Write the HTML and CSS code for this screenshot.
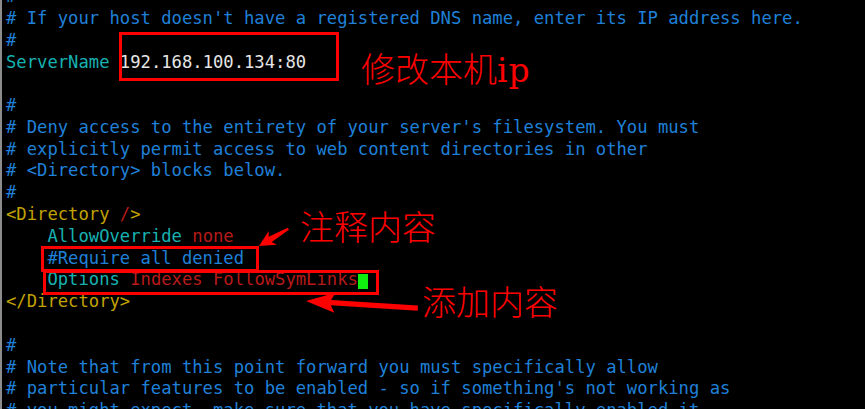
FILE: index.html
```html
<!DOCTYPE html>
<html lang="zh-CN">
<head>
<meta charset="utf-8">
<title>httpd.conf</title>
<link rel="stylesheet" href="styles.css">
</head>
<body>
<div class="term">
<pre class="code"><span class="c">#</span>
<span class="c"># If your host doesn't have a registered DNS name, enter its IP address here.</span>
<span class="c">#</span>
<span class="k">ServerName</span> <span class="w">192.168.100.134:80</span>

<span class="c">#</span>
<span class="c"># Deny access to the entirety of your server's filesystem. You must</span>
<span class="c"># explicitly permit access to web content directories in other</span>
<span class="c"># &lt;Directory&gt; blocks below.</span>
<span class="c">#</span>
<span class="y">&lt;Directory</span> <span class="r">/</span><span class="y">&gt;</span>
    <span class="k">AllowOverride</span> <span class="r">none</span>
    <span class="c">#Require all denied</span>
    <span class="k">Options</span> <span class="r">Indexes FollowSymLinks</span><span class="cursor"></span>
<span class="y">&lt;/Directory&gt;</span>

<span class="c">#</span>
<span class="c"># Note that from this point forward you must specifically allow</span>
<span class="c"># particular features to be enabled - so if something's not working as</span>
<span class="c"># you might expect, make sure that you have specifically enabled it</span></pre>
</div>
<div class="overlay">
  <div class="box box-ip"></div>
  <div class="box box-require"></div>
  <div class="box box-options"></div>
  <div class="note note-ip">修改本机<span class="latin">ip</span></div>
  <div class="note note-comment">注释内容</div>
  <div class="note note-add">添加内容</div>
  <svg class="arrows" width="865" height="409" viewBox="0 0 865 409">
    <polygon fill="#ff0000" transform="translate(259,246) rotate(-30.4)" points="0,0 16,-8 13,-3 34,-1.2 34,1.2 13,3 16,8"/>
    <polygon fill="#ff0000" transform="translate(306,301) rotate(3.6)" points="0,0 29,-10 25,-2.6 112,-2.6 112,2.6 25,2.6 29,10"/>
  </svg>
</div>
</body>
</html>
```
FILE: styles.css
```css
html, body {
  margin: 0;
  padding: 0;
  background: #000;
  width: 865px;
  height: 409px;
  overflow: hidden;
}

body {
  position: relative;
}

.term {
  height: 409px;
  border-left: 2px solid #8c8c8c;
  padding-left: 4px;
  overflow: hidden;
}

.code {
  margin: -13.9px 0 0 0;
  font-family: "DejaVu Sans Mono", "Liberation Mono", monospace;
  font-size: 17.2px;
  line-height: 21.8px;
  color: #e0e0e0;
  white-space: pre;
}

.c { color: #1f80d9; }
.k { color: #16b2b2; }
.y { color: #c2a200; }
.r { color: #b81a1a; }
.w { color: #e6e6e6; }

.cursor {
  display: inline-block;
  width: 10px;
  height: 15px;
  background: #10ee10;
  vertical-align: -4px;
}

.overlay {
  position: absolute;
  left: 0;
  top: 0;
  width: 865px;
  height: 409px;
  pointer-events: none;
}

.box {
  position: absolute;
  box-sizing: border-box;
  border: 3px solid #ff0000;
}

.box-ip { left: 119px; top: 32px; width: 220px; height: 49px; }
.box-require { left: 41px; top: 246px; width: 218px; height: 26px; }
.box-options { left: 43px; top: 270px; width: 336px; height: 25px; }

.note {
  position: absolute;
  font-family: "Noto Sans CJK SC", sans-serif;
  font-weight: 300;
  font-size: 34px;
  line-height: 34px;
  color: #ff0000;
  white-space: nowrap;
}

.latin {
  font-family: "DejaVu Serif", "Liberation Serif", serif;
  font-weight: 400;
  font-size: 33px;
  letter-spacing: 1px;
}

.note-ip { left: 361px; top: 51px; }
.note-comment { left: 300px; top: 209px; }
.note-add { left: 422px; top: 284px; }

.arrows {
  position: absolute;
  left: 0;
  top: 0;
}
```
